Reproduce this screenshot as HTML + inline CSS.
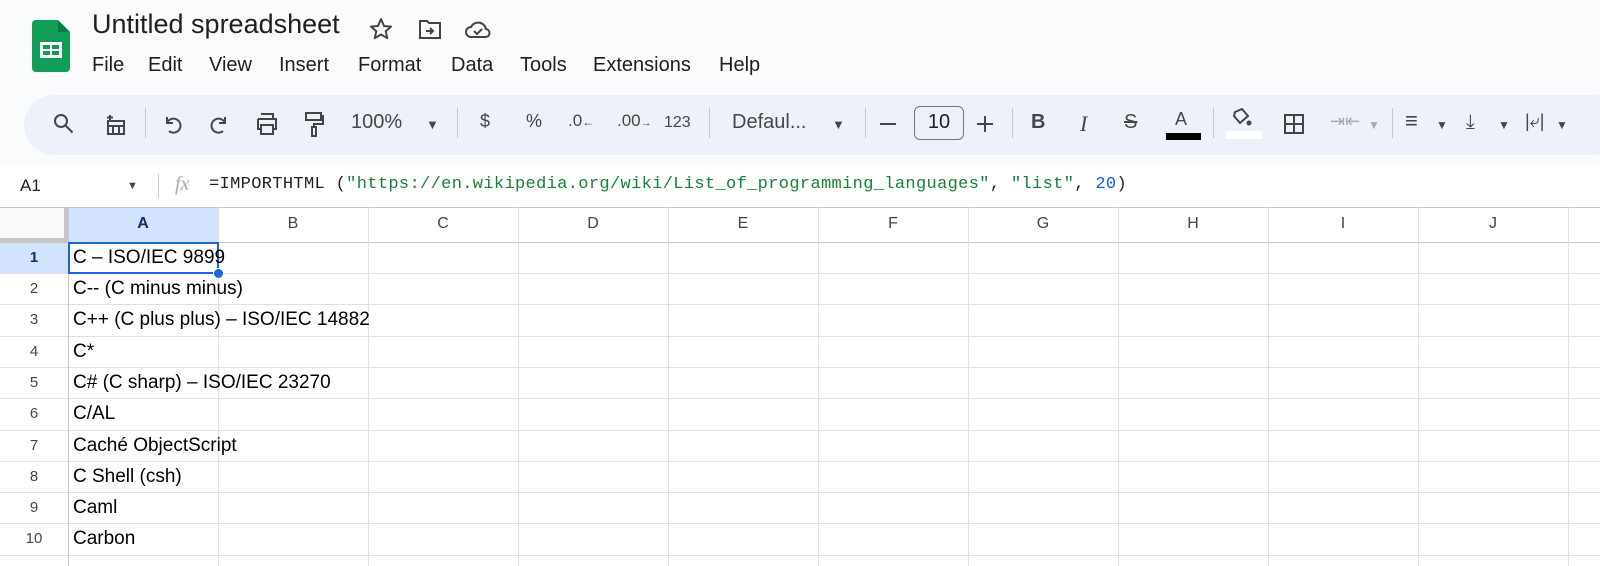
<!DOCTYPE html>
<html><head><meta charset="utf-8"><style>
*{margin:0;padding:0;box-sizing:border-box}
body{width:1600px;height:566px;overflow:hidden;background:#fff;font-family:"Liberation Sans",Arial,sans-serif;color:#1f1f1f;position:relative}
.top{position:absolute;left:0;top:0;width:1600px;height:165px;background:#f9fbfd}
.abs{position:absolute}
.title{left:92px;top:9px;font-size:27px;color:#1f1f1f}
.menu{top:54px;font-size:20px}
.tb{left:24px;top:95px;width:1600px;height:60px;background:#edf2fa;border-radius:30px}
.ti{position:absolute;top:111px;font-size:20px;color:#444746}
.sep{position:absolute;top:108px;width:1px;height:30px;background:#c7c7c7}
.fbar{top:165px;left:0;width:1600px;height:42px;background:#fff}
.mono{font-family:"Liberation Mono",monospace;font-size:17px}
.vl{position:absolute;top:207px;width:1px;height:359px;background:#e1e1e1}
.hl{position:absolute;left:0;width:1600px;height:1px;background:#e1e1e1}
.ch{position:absolute;top:215px;font-size:16px;color:#444;width:150px;text-align:center}
.rh{position:absolute;left:0;width:68px;text-align:center;font-size:15px;color:#444}
.cell{position:absolute;left:73px;font-size:19px;color:#000}
</style></head><body>
<div class="top"></div>
<svg class="abs" style="left:32px;top:20px" width="38" height="52" viewBox="0 0 38 52"><path d="M4 0h22l12 12v36a4 4 0 0 1-4 4H4a4 4 0 0 1-4-4V4a4 4 0 0 1 4-4z" fill="#0f9d58"/><path d="M26 0l12 12H26z" fill="#0b7f43"/><rect x="8" y="22" width="22" height="16" fill="#fff"/><rect x="11" y="25" width="7" height="4" fill="#0f9d58"/><rect x="20" y="25" width="7" height="4" fill="#0f9d58"/><rect x="11" y="31" width="7" height="4" fill="#0f9d58"/><rect x="20" y="31" width="7" height="4" fill="#0f9d58"/></svg>
<div class="abs title">Untitled spreadsheet</div>
<svg class="abs" style="left:369px;top:17px" width="24" height="24" viewBox="0 0 24 24"><path d="M12 2l3 7 7 .6-5.3 4.6 1.6 7L12 17.5 5.7 21.2l1.6-7L2 9.6 9 9z" fill="none" stroke="#444" stroke-width="2" stroke-linejoin="round"/></svg>
<svg class="abs" style="left:418px;top:18px" width="24" height="22" viewBox="0 0 24 22"><path d="M2 3h7l2 2h11v15H2z" fill="none" stroke="#444" stroke-width="2"/><path d="M8 13h7M12 10l3 3-3 3" fill="none" stroke="#444" stroke-width="2"/></svg>
<svg class="abs" style="left:464px;top:18px" width="28" height="22" viewBox="0 0 28 22"><path d="M7 19a5 5 0 0 1 0-10 8 8 0 0 1 15 2 4 4 0 0 1-1 8z" fill="none" stroke="#444" stroke-width="2"/><path d="M10 13l3 3 5-5" fill="none" stroke="#444" stroke-width="2"/></svg>
<div class="abs menu" style="left:92px">File</div>
<div class="abs menu" style="left:148px">Edit</div>
<div class="abs menu" style="left:209px">View</div>
<div class="abs menu" style="left:279px">Insert</div>
<div class="abs menu" style="left:358px">Format</div>
<div class="abs menu" style="left:451px">Data</div>
<div class="abs menu" style="left:520px">Tools</div>
<div class="abs menu" style="left:593px">Extensions</div>
<div class="abs menu" style="left:719px">Help</div>
<div class="abs tb"></div>
<svg class="abs" style="left:53px;top:113px" width="22" height="22" viewBox="0 0 22 22"><circle cx="8" cy="8" r="6" fill="none" stroke="#444" stroke-width="2"/><path d="M12.5 12.5l7 7" stroke="#444" stroke-width="2"/></svg>
<svg class="abs" style="left:105px;top:114px" width="22" height="22" viewBox="0 0 22 22"><path d="M3 7h16v13H3zM3 12h16M8 12v8M14 12v8M5 1v5M2 3.5h6" fill="none" stroke="#444" stroke-width="2"/></svg>
<div class="sep" style="left:145px"></div>
<svg class="abs" style="left:162px;top:113px" width="22" height="22" viewBox="0 0 22 22"><path d="M5 4v6h6M5 10a7 7 0 1 1 2 8" fill="none" stroke="#444" stroke-width="2"/></svg>
<svg class="abs" style="left:208px;top:113px" width="22" height="22" viewBox="0 0 22 22"><path d="M17 4v6h-6M17 10a7 7 0 1 0-2 8" fill="none" stroke="#444" stroke-width="2"/></svg>
<svg class="abs" style="left:255px;top:113px" width="24" height="22" viewBox="0 0 24 22"><path d="M6 1h12v5M3 6h18v10h-3M6 16H3V6M6 12h12v9H6z" fill="none" stroke="#444" stroke-width="2"/></svg>
<svg class="abs" style="left:303px;top:111px" width="22" height="26" viewBox="0 0 22 26"><path d="M3 2h15v7H3zM18 5h2v8h-9v3M9 16h4v9H9z" fill="none" stroke="#444" stroke-width="2"/></svg>
<div class="ti" style="left:351px">100%</div>
<div class="ti" style="left:426px;font-size:13px;top:117px">▼</div>
<div class="sep" style="left:457px"></div>
<div class="ti" style="left:480px;font-size:18px">$</div>
<div class="ti" style="left:526px;font-size:18px">%</div>
<div class="ti" style="left:568px;font-size:17px">.0<span style="font-size:12px">←</span></div>
<div class="ti" style="left:617px;font-size:17px">.00<span style="font-size:11px">→</span></div>
<div class="ti" style="left:664px;font-size:16px;top:114px">123</div>
<div class="sep" style="left:709px"></div>
<div class="ti" style="left:732px">Defaul...</div>
<div class="ti" style="left:832px;font-size:13px;top:117px">▼</div>
<div class="sep" style="left:865px"></div>
<div class="abs" style="left:880px;top:123px;width:16px;height:2px;background:#444"></div>
<div class="abs" style="left:914px;top:106px;width:50px;height:34px;border:1.5px solid #747775;border-radius:6px;text-align:center;font-size:20px;line-height:31px;color:#1f1f1f">10</div>
<div class="abs" style="left:977px;top:123px;width:16px;height:2px;background:#444"></div>
<div class="abs" style="left:984px;top:116px;width:2px;height:16px;background:#444"></div>
<div class="sep" style="left:1012px"></div>
<div class="ti" style="left:1031px;font-weight:bold">B</div>
<div class="ti" style="left:1080px;font-style:italic;font-family:'Liberation Serif',serif;font-size:22px">I</div>
<div class="ti" style="left:1124px;text-decoration:line-through">S</div>
<div class="ti" style="left:1175px;font-size:18px;top:109px">A</div>
<div class="abs" style="left:1166px;top:133px;width:35px;height:7px;background:#000"></div>
<div class="sep" style="left:1213px"></div>
<svg class="abs" style="left:1230px;top:108px" width="24" height="20" viewBox="0 0 24 20"><path d="M5 4l7-3 6 7-8 7-6-7z" fill="none" stroke="#444" stroke-width="2"/><circle cx="19" cy="15" r="2.5" fill="#444"/></svg>
<div class="abs" style="left:1226px;top:131px;width:36px;height:8px;background:#fff"></div>
<svg class="abs" style="left:1283px;top:113px" width="22" height="22" viewBox="0 0 22 22"><path d="M2 2h18v18H2zM11 2v18M2 11h18" fill="none" stroke="#444" stroke-width="2"/></svg>
<div class="ti" style="left:1330px;color:#aaa;font-size:18px">⇥⇤</div>
<div class="ti" style="left:1368px;color:#aaa;font-size:12px;top:118px">▼</div>
<div class="sep" style="left:1392px"></div>
<div class="ti" style="left:1405px;font-size:22px;top:108px">≡</div>
<div class="ti" style="left:1436px;font-size:12px;top:118px">▼</div>
<div class="ti" style="left:1466px;font-size:20px">⤓</div>
<div class="ti" style="left:1498px;font-size:12px;top:118px">▼</div>
<div class="ti" style="left:1525px;font-size:18px">|⤶|</div>
<div class="ti" style="left:1556px;font-size:12px;top:118px">▼</div>
<div class="abs fbar"></div>
<div class="abs" style="left:20px;top:176px;font-size:17px">A1</div>
<div class="abs" style="left:127px;top:180px;font-size:11px;color:#444">▼</div>
<div class="abs" style="left:158px;top:174px;width:1px;height:24px;background:#c7c7c7"></div>
<div class="abs" style="left:175px;top:173px;font-size:20px;color:#aaa;font-style:italic;font-family:'Liberation Serif',serif">fx</div>
<div class="abs mono" style="left:209px;top:175px;letter-spacing:0.35px;white-space:nowrap">=IMPORTHTML (<span style="color:#188038">"https://en.wikipedia.org/wiki/List_of_programming_languages"</span>, <span style="color:#188038">"list"</span>, <span style="color:#1a5fd0">20</span>)</div>
<div class="abs" style="left:0;top:207px;width:1600px;height:1px;background:#c7c7c7"></div>
<div class="abs" style="left:0;top:208px;width:68px;height:34px;background:#f8f9fa;border-right:4px solid #c4c7c5;border-bottom:4px solid #c4c7c5"></div>
<div class="abs" style="left:68px;top:208px;width:150px;height:34px;background:#d3e3fd"></div>
<div class="abs" style="left:0;top:242px;width:68px;height:31px;background:#d3e3fd"></div>
<div class="hl" style="top:242px;background:#c7c7c7"></div>
<div class="hl" style="top:273px"></div><div class="hl" style="top:304px"></div><div class="hl" style="top:336px"></div><div class="hl" style="top:367px"></div><div class="hl" style="top:398px"></div><div class="hl" style="top:430px"></div><div class="hl" style="top:461px"></div><div class="hl" style="top:492px"></div><div class="hl" style="top:523px"></div><div class="hl" style="top:555px"></div>
<div class="vl" style="left:68px;background:#c7c7c7"></div>
<div class="vl" style="left:218px"></div><div class="vl" style="left:368px"></div><div class="vl" style="left:518px"></div><div class="vl" style="left:668px"></div><div class="vl" style="left:818px"></div><div class="vl" style="left:968px"></div><div class="vl" style="left:1118px"></div><div class="vl" style="left:1268px"></div><div class="vl" style="left:1418px"></div><div class="vl" style="left:1568px"></div>
<div class="ch" style="left:68px;font-weight:bold;color:#0b2d6b">A</div>
<div class="ch" style="left:218px">B</div><div class="ch" style="left:368px">C</div><div class="ch" style="left:518px">D</div><div class="ch" style="left:668px">E</div><div class="ch" style="left:818px">F</div><div class="ch" style="left:968px">G</div><div class="ch" style="left:1118px">H</div><div class="ch" style="left:1268px">I</div><div class="ch" style="left:1418px">J</div>
<div class="rh" style="top:249px;font-weight:bold;color:#0b2d6b">1</div>
<div class="rh" style="top:280px">2</div><div class="rh" style="top:311px">3</div><div class="rh" style="top:343px">4</div><div class="rh" style="top:374px">5</div><div class="rh" style="top:405px">6</div><div class="rh" style="top:437px">7</div><div class="rh" style="top:468px">8</div><div class="rh" style="top:499px">9</div><div class="rh" style="top:530px">10</div>
<div class="abs" style="left:68px;top:242px;width:151px;height:32px;border:2px solid #1a66d6"></div>
<div class="cell" style="top:247px">C – ISO/IEC 9899</div>
<div class="abs" style="left:213px;top:268px;width:11px;height:11px;border-radius:50%;background:#1a66d6;border:1px solid #fff"></div>
<div class="cell" style="top:278px">C-- (C minus minus)</div>
<div class="cell" style="top:309px">C++ (C plus plus) – ISO/IEC 14882</div>
<div class="cell" style="top:341px">C*</div>
<div class="cell" style="top:372px">C# (C sharp) – ISO/IEC 23270</div>
<div class="cell" style="top:403px">C/AL</div>
<div class="cell" style="top:435px">Caché ObjectScript</div>
<div class="cell" style="top:466px">C Shell (csh)</div>
<div class="cell" style="top:497px">Caml</div>
<div class="cell" style="top:528px">Carbon</div>
</body></html>
